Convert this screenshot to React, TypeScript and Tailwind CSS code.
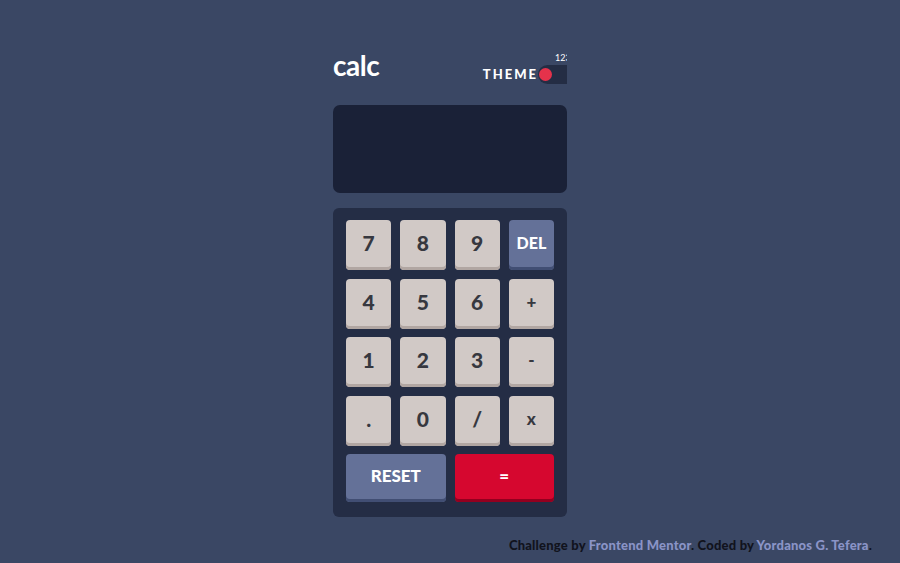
const keys = [
  { label: "7" },
  { label: "8" },
  { label: "9" },
  { label: "DEL", kind: "del" },
  { label: "4" },
  { label: "5" },
  { label: "6" },
  { label: "+", kind: "op" },
  { label: "1" },
  { label: "2" },
  { label: "3" },
  { label: "-", kind: "op" },
  { label: "." },
  { label: "0" },
  { label: "/" },
  { label: "x", kind: "op" },
];

export default function App() {
  return (
    <div
      className="min-h-screen bg-[#3a4764] flex flex-col items-center"
      style={{ fontFamily: "Lato, 'Open Sans', sans-serif" }}
    >
      <div className="w-[234px] pt-[50px]">
        {/* Header */}
        <div className="flex items-end justify-between h-[34px]">
          <h1 className="text-[28px] font-bold text-white leading-none pb-[5px] tracking-[-0.5px]">calc</h1>
          <div className="flex items-end">
            <span className="text-[13px] font-black text-white tracking-[2px] leading-none mb-[3px]">THEME</span>
            <div className="w-[29px] overflow-hidden flex flex-col">
              <span className="text-[9px] text-white leading-none pl-[17px] whitespace-nowrap mb-[3px]">123</span>
              <div className="h-[19px] w-[40px] bg-[#242d44] rounded-l-full flex items-center pl-[1px]">
                <div className="w-[13px] h-[13px] rounded-full bg-[#e5324b]" />
              </div>
            </div>
          </div>
        </div>

        {/* Screen */}
        <div className="mt-[21px] h-[88px] rounded-[7px] bg-[#1a2137]" />

        {/* Keypad */}
        <div className="mt-[15px] rounded-[6px] bg-[#242d45] pt-[12px] px-[13px] pb-[15px]">
          <div className="grid grid-cols-4 gap-x-[9px] gap-y-[8.5px]">
            {keys.map((k) => (
              <button
                key={k.label}
                className={
                  k.kind === "del"
                    ? "h-[50px] pb-[4px] rounded-[4px] bg-[#647198] shadow-[inset_0_-3px_0_#414e73] text-white text-[16px] font-black"
                    : k.kind === "op"
                    ? "h-[50px] pb-[4px] rounded-[4px] bg-[#d1c9c6] shadow-[inset_0_-3px_0_#b1a6a2] text-[#37383f] text-[17px] font-black"
                    : "h-[50px] pb-[4px] rounded-[4px] bg-[#d1c9c6] shadow-[inset_0_-3px_0_#b1a6a2] text-[#37383f] text-[21px] font-black"
                }
              >
                {k.label}
              </button>
            ))}
            <button className="col-span-2 h-[48px] pb-[4px] rounded-[4px] bg-[#647198] shadow-[inset_0_-3px_0_#414e73] text-white text-[17px] font-black">
              RESET
            </button>
            <button className="col-span-2 h-[48px] pb-[4px] rounded-[4px] bg-[#d6072f] shadow-[inset_0_-3px_0_#93001f] text-white text-[17px] font-black">
              =
            </button>
          </div>
        </div>
      </div>

      {/* Footer */}
      <p className="w-full text-right pr-[28px] mt-[22px] text-[13px] font-black text-[#11131d] tracking-[0.2px] leading-none">
        Challenge by <span className="text-[#8a94c7]">Frontend Mentor</span>. Coded by{" "}
        <span className="text-[#8a94c7]">Yordanos G. Tefera</span>.
      </p>
    </div>
  );
}
